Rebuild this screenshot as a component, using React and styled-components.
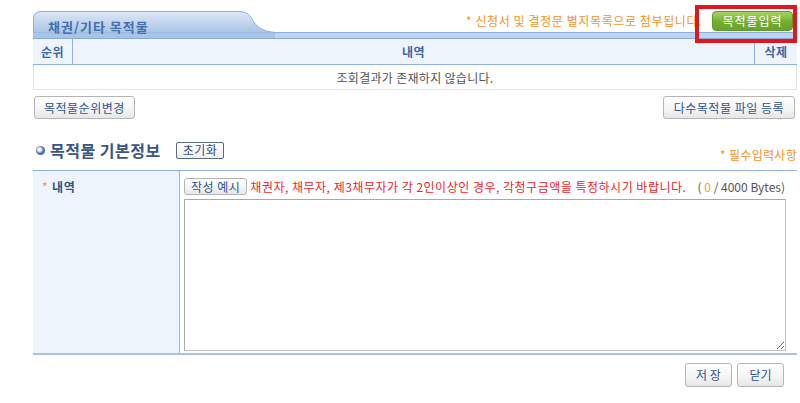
import React from "react";
import styled, { createGlobalStyle } from "styled-components";

const GlobalStyle = createGlobalStyle`
  html, body {
    margin: 0;
    padding: 0;
    background: #ffffff;
  }
  body {
    font-family: "Noto Sans CJK KR", "Noto Sans", sans-serif;
    font-size: 12px;
    color: #444;
  }
  * {
    box-sizing: border-box;
  }
`;

const Page = styled.div`
  width: 797px;
  padding-left: 33px;
`;

/* ---------- 상단 탭 ---------- */

const TopBar = styled.div`
  position: relative;
  display: flex;
  align-items: flex-end;
  height: 33px;
`;

const Tab = styled.div`
  position: relative;
  width: 242px;
  height: 22px;
  flex-shrink: 0;
`;

const TabShape = styled.svg`
  position: absolute;
  left: 0;
  top: 0;
`;

const TabTitle = styled.span`
  position: relative;
  display: block;
  padding: 9px 0 0 15px;
  font-size: 13px;
  line-height: 13px;
  font-weight: bold;
  letter-spacing: 1px;
  color: #4470aa;
`;

const TopRest = styled.div`
  flex: 1;
  display: flex;
  align-items: flex-end;
  justify-content: flex-end;
  height: 33px;
  padding-bottom: 1px;
  border-bottom: 1px solid #8eaedb;
`;

const Notice = styled.span`
  margin-right: 10px;
  line-height: 20px;
  font-size: 12px;
  letter-spacing: 0.6px;
  color: #f7931e;
`;

const GreenButton = styled.button`
  width: 81px;
  height: 20px;
  margin-right: 4px;
  padding: 0;
  border: 1px solid #5f9b27;
  border-radius: 4px;
  background: linear-gradient(#a5d364, #74ad33 55%, #67a22a);
  color: #fff;
  font-family: inherit;
  font-size: 12px;
  line-height: 18px;
  letter-spacing: 1px;
`;

const RedMark = styled.div`
  position: absolute;
  left: 662px;
  top: 5px;
  width: 102px;
  height: 38px;
  border: 4px solid #e3151f;
  pointer-events: none;
`;

const Band = styled.div`
  height: 6px;
  border-bottom: 1px solid #87a9d8;
  background: linear-gradient(to right, #a8c4e6 0 242px, #bdd3ee 242px);
`;

/* ---------- 목록 테이블 ---------- */

const ListHead = styled.div`
  display: grid;
  grid-template-columns: 39px 1fr 42px;
  height: 26px;
  background: #eef4fb;
  border-bottom: 1px solid #8eb0df;
`;

const HeadCell = styled.div`
  display: flex;
  align-items: center;
  justify-content: center;
  font-weight: bold;
  font-size: 12px;
  letter-spacing: 0.5px;
  color: #3b67a6;
  border-left: ${(p) => (p.$divider ? "1px solid #8eb0df" : "none")};
  border-right: ${(p) => (p.$divider ? "1px solid #8eb0df" : "none")};
`;

const EmptyRow = styled.div`
  height: 25px;
  display: flex;
  align-items: center;
  justify-content: center;
  border: 1px solid #e2e2e2;
  border-top: none;
  color: #555;
  font-size: 12px;
  letter-spacing: 0.3px;
`;

const ButtonRow = styled.div`
  display: flex;
  justify-content: space-between;
  margin-top: 6px;
  padding: 0 2px 0 1px;
`;

const GrayButton = styled.button`
  height: ${(p) => p.$h || 23}px;
  width: ${(p) => (p.$w ? `${p.$w}px` : "auto")};
  padding: 0 ${(p) => p.$px ?? 8}px;
  border: 1px solid #b5b5b5;
  border-radius: 3px;
  background: linear-gradient(#ffffff, #f4f4f4 60%, #e6e6e6);
  color: #2d5591;
  font-family: inherit;
  font-size: 12px;
  line-height: 1;
  letter-spacing: ${(p) => p.$ls || 0}px;
  white-space: nowrap;
`;

/* ---------- 기본정보 ---------- */

const SectionHead = styled.div`
  display: flex;
  align-items: center;
  height: 20px;
  margin-top: 21px;
  padding-left: 3px;
`;

const Bullet = styled.span`
  width: 9px;
  height: 9px;
  border-radius: 50%;
  margin-right: 5px;
  background: radial-gradient(circle at 40% 40%, #ffffff 0 1.5px, #9db7e3 2.5px, #3e64ab 4.5px);
`;

const SectionTitle = styled.span`
  font-size: 16px;
  line-height: 20px;
  font-weight: bold;
  color: #3a5684;
  letter-spacing: 0.5px;
`;

const ResetButton = styled.button`
  height: 17px;
  margin-left: 15px;
  padding: 0 6px;
  border: 1px solid #5a6b80;
  border-radius: 2px;
  background: linear-gradient(#ffffff, #eeeeee);
  color: #2d4f80;
  font-family: inherit;
  font-size: 12px;
  line-height: 1;
  letter-spacing: 0.5px;
`;

const Required = styled.span`
  margin-left: auto;
  align-self: flex-end;
  margin-bottom: -3px;
  font-size: 12px;
  letter-spacing: 0.3px;
  color: #f7931e;
`;

const FormTable = styled.div`
  margin-top: 10px;
  border-top: 1px solid #8eb0df;
  border-bottom: 2px solid #a8c2e8;
  display: grid;
  grid-template-columns: 147px 1fr;
`;

const LabelCell = styled.div`
  background: #eef4fb;
  border-right: 1px solid #9ebae2;
  padding: 7px 0 0 9px;
  font-size: 12px;
  line-height: 17px;
  font-weight: bold;
  letter-spacing: 0.5px;
  color: #34527f;
`;

const Star = styled.span`
  color: #f7931e;
  font-weight: normal;
  margin-right: 4px;
`;

const FieldCell = styled.div`
  padding: 7px 10px 2px 4px;
`;

const FieldTools = styled.div`
  display: flex;
  align-items: center;
  height: 17px;
`;

const Hint = styled.span`
  margin-left: 3px;
  font-size: 12px;
  color: #f2232a;
  white-space: nowrap;
  letter-spacing: 0.5px;
`;

const Counter = styled.span`
  margin-left: auto;
  margin-right: 2px;
  font-size: 12px;
  color: #555;
  white-space: nowrap;
`;

const Zero = styled.span`
  color: #f7a21e;
`;

const TextArea = styled.textarea`
  display: block;
  width: 602px;
  height: 152px;
  margin-top: 4px;
  border: 1px solid #c3c3c3;
  border-top-color: #a9a9a9;
  border-left-color: #a9a9a9;
  font-family: inherit;
  font-size: 12px;
  resize: both;
`;

const Actions = styled.div`
  display: flex;
  justify-content: flex-end;
  gap: 5px;
  margin-top: 8px;
  padding-right: 13px;
`;

export default function App() {
  return (
    <>
      <GlobalStyle />
      <Page>
        <TopBar>
          <Tab>
            <TabShape width="242" height="22" viewBox="0 0 242 22">
              <defs>
                <linearGradient id="tabGrad" x1="0" y1="0" x2="0" y2="1">
                  <stop offset="0" stopColor="#dce8f6" />
                  <stop offset="1" stopColor="#a8c4e6" />
                </linearGradient>
              </defs>
              <path
                d="M0.5,22 V8 Q0.5,0.5 8,0.5 H207 Q215,0.5 219,8 Q225,20.5 242,21.5 V22 Z"
                fill="url(#tabGrad)"
                stroke="#8eaedb"
                strokeWidth="1"
              />
            </TabShape>
            <TabTitle>채권/기타 목적물</TabTitle>
          </Tab>
          <TopRest>
            <Notice>* 신청서 및 결정문 별지목록으로 첨부됩니다.</Notice>
            <GreenButton>목적물입력</GreenButton>
          </TopRest>
          <RedMark />
        </TopBar>
        <Band />

        <ListHead>
          <HeadCell>순위</HeadCell>
          <HeadCell $divider>내역</HeadCell>
          <HeadCell>삭제</HeadCell>
        </ListHead>
        <EmptyRow>조회결과가 존재하지 않습니다.</EmptyRow>

        <ButtonRow>
          <GrayButton $px={9} $ls={0.5}>
            목적물순위변경
          </GrayButton>
          <GrayButton $px={10} $ls={0.5}>
            다수목적물 파일 등록
          </GrayButton>
        </ButtonRow>

        <SectionHead>
          <Bullet />
          <SectionTitle>목적물 기본정보</SectionTitle>
          <ResetButton>초기화</ResetButton>
          <Required>* 필수입력사항</Required>
        </SectionHead>

        <FormTable>
          <LabelCell>
            <Star>*</Star>내역
          </LabelCell>
          <FieldCell>
            <FieldTools>
              <GrayButton $h={17} $px={6} $ls={0.5}>
                작성 예시
              </GrayButton>
              <Hint>
                채권자, 채무자, 제3채무자가 각 2인이상인 경우, 각청구금액을
                특정하시기 바랍니다.
              </Hint>
              <Counter>
                ( <Zero>0</Zero> / 4000 Bytes)
              </Counter>
            </FieldTools>
            <TextArea />
          </FieldCell>
        </FormTable>

        <Actions>
          <GrayButton $h={24} $px={0} $w={47}>
            저 장
          </GrayButton>
          <GrayButton $h={24} $px={0} $w={47}>
            닫기
          </GrayButton>
        </Actions>
      </Page>
    </>
  );
}
